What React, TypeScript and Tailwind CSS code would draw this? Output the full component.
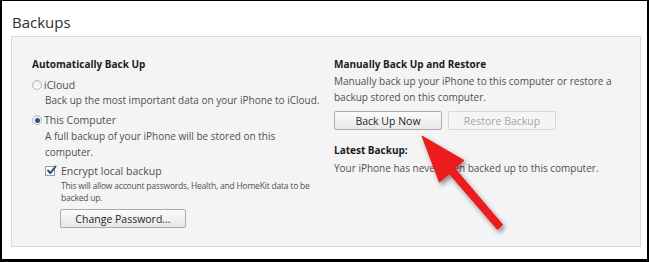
import React from "react";

const font = { fontFamily: '"Open Sans", "Noto Sans", Arial, sans-serif' };

function Radio({ checked }: { checked?: boolean }) {
  return (
    <span className="relative inline-flex h-[10px] w-[10px] shrink-0 items-center justify-center rounded-full border border-[#b5b5b5] bg-gradient-to-b from-[#ededed] to-white">
      {checked && <span className="h-[5px] w-[5px] rounded-full bg-[#2b4f85]" />}
    </span>
  );
}

function Checkbox() {
  return (
    <span className="relative inline-flex h-[10px] w-[10px] shrink-0 items-center justify-center border border-[#9a9a9a] bg-white">
      <svg width="11" height="11" viewBox="0 0 11 11" className="absolute -top-[2px] left-[0px]">
        <path d="M2 5.5 L4.3 8.2 L9.5 1.5" fill="none" stroke="#2b4f85" strokeWidth="2" strokeLinecap="round" strokeLinejoin="round" />
      </svg>
    </span>
  );
}

function Button({ label, disabled, width }: { label: string; disabled?: boolean; width: string }) {
  return (
    <div
      className={`flex h-[19px] items-center justify-center rounded-[2px] border text-[10.5px] ${width} ${
        disabled
          ? "border-[#d6d6d6] bg-[#f5f5f5] text-[#a6a6a6]"
          : "border-[#acacac] bg-gradient-to-b from-[#fbfbfb] to-[#e8e8e8] text-[#262626]"
      }`}
    >
      {label}
    </div>
  );
}

export default function App() {
  return (
    <div className="h-[262px] w-[649px] bg-black pl-[2px] pr-[2px] pt-[1px] pb-[3px]" style={font}>
      <div className="relative flex h-full w-full flex-col bg-white">
        <div className="h-[35px] pl-[10px] pt-[11px] text-[15px] leading-[20px] text-[#2e2e2e]">Backups</div>
        <div className="ml-[9px] mr-[6px] grid h-[211px] grid-cols-[302px_1fr] border border-[#dadada] bg-[#f4f4f4] pl-[20px] pt-[19px]">
          {/* left column */}
          <div className="flex flex-col text-[10px] leading-[16px] text-[#505050]">
            <div className="font-bold text-[#1c1c1c]">Automatically Back Up</div>
            <div className="mt-[5px] flex h-[15px] items-center gap-[2px] text-[10.5px]">
              <Radio />
              <span>iCloud</span>
            </div>
            <div className="pl-[13px]">Back up the most important data on your iPhone to iCloud.</div>
            <div className="mt-[4px] flex items-center gap-[2px] text-[10.5px]">
              <Radio checked />
              <span>This Computer</span>
            </div>
            <div className="pl-[13px] pr-[39px]">A full backup of your iPhone will be stored on this computer.</div>
            <div className="mt-[3px] flex items-center gap-[6px] pl-[13px] text-[10.5px]">
              <Checkbox />
              <span>Encrypt local backup</span>
            </div>
            <div className="mt-[1px] pl-[29px] pr-[10px] text-[8.5px] leading-[12px] tracking-[-0.2px]">
              This will allow account passwords, Health, and HomeKit data to be backed up.
            </div>
            <div className="mt-[5px] pl-[28px]">
              <Button label="Change Password..." width="w-[126px]" />
            </div>
          </div>
          {/* right column */}
          <div className="flex flex-col text-[10px] leading-[16px] text-[#505050]">
            <div className="font-bold text-[#1c1c1c]">Manually Back Up and Restore</div>
            <div className="mt-[1px] pr-[21px]">Manually back up your iPhone to this computer or restore a backup stored on this computer.</div>
            <div className="mt-[6px] flex gap-[6px]">
              <Button label="Back Up Now" width="w-[108px]" />
              <Button label="Restore Backup" disabled width="w-[108px]" />
            </div>
            <div className="mt-[12px] font-bold text-[#1c1c1c]">Latest Backup:</div>
            <div className="mt-[2px]">Your iPhone has never been backed up to this computer.</div>
          </div>
        </div>

        {/* red arrow annotation */}
        <svg className="pointer-events-none absolute left-[-2px] top-[-1px]" width="649" height="262" viewBox="0 0 649 262">
          <defs>
            <filter id="sh" x="-30%" y="-30%" width="160%" height="160%">
              <feDropShadow dx="2" dy="3" stdDeviation="2.5" floodColor="#000" floodOpacity="0.45" />
            </filter>
          </defs>
          <polygon
            points="422,136 464,160.5 454.6,168.3 502.6,224.7 497.4,229.3 449.4,173.7 439.4,182"
            fill="#ec1a1a"
            stroke="#ec1a1a"
            strokeWidth="1"
            strokeLinejoin="round"
            filter="url(#sh)"
          />
        </svg>
      </div>
    </div>
  );
}
